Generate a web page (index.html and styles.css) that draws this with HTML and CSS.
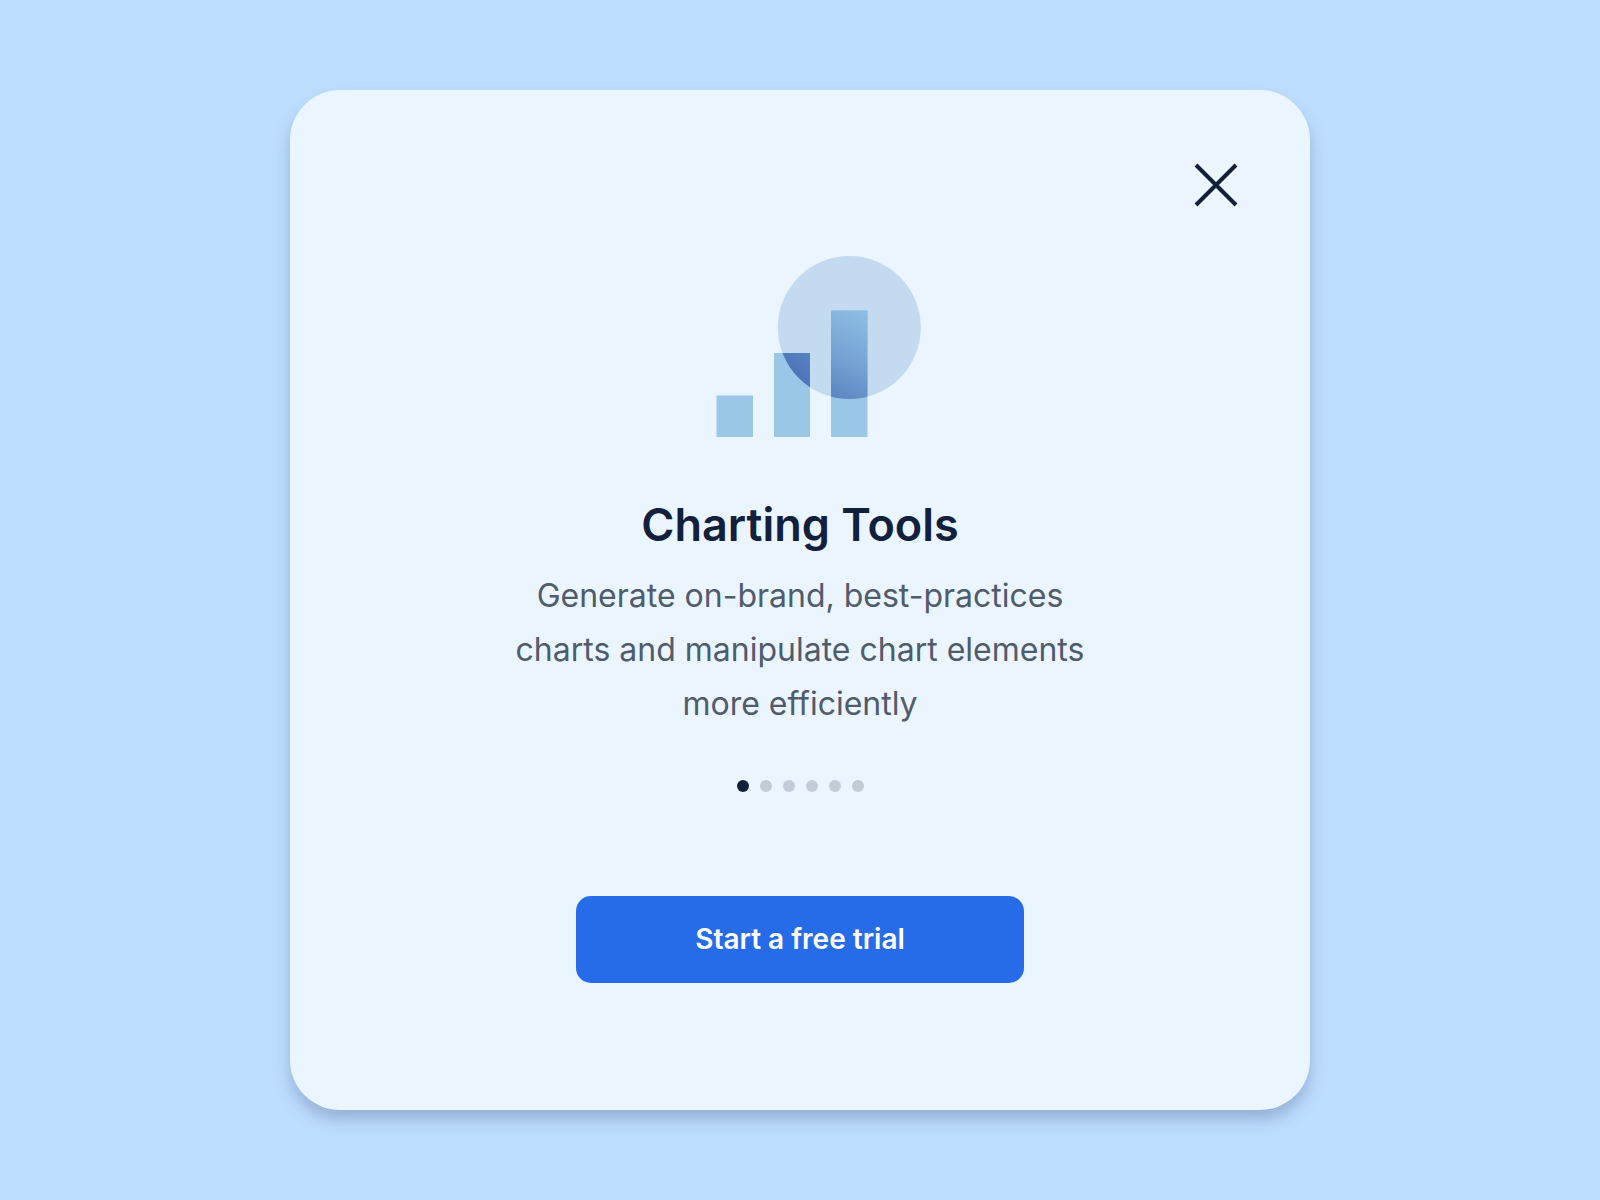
FILE: index.html
```
<!DOCTYPE html>
<html lang="en">
<head>
  <meta charset="UTF-8" />
  <meta name="viewport" content="width=device-width, initial-scale=1" />
  <title>Charting Tools</title>
  <link rel="stylesheet" href="styles.css">
</head>
<body>
  <main class="card">
    <button class="close" type="button" aria-label="Close">
      <svg viewBox="0 0 42 42" width="42" height="42">
        <path d="M1 1 L41 41 M41 1 L1 41" />
      </svg>
    </button>

    <!-- Bar chart with lens -->
    <svg class="illustration" viewBox="0 0 240 181" width="240" height="181" aria-hidden="true">
      <defs>
        <linearGradient id="overlap" gradientUnits="userSpaceOnUse" x1="187" y1="54" x2="140" y2="150">
          <stop offset="0" stop-color="#8fbfe4" />
          <stop offset="0.5" stop-color="#75a2d3" />
          <stop offset="1" stop-color="#547cbc" />
        </linearGradient>
        <linearGradient id="overlap-small" gradientUnits="userSpaceOnUse" x1="130" y1="97" x2="106" y2="130">
          <stop offset="0" stop-color="#5a83c2" />
          <stop offset="1" stop-color="#456db3" />
        </linearGradient>
        <clipPath id="lens">
          <circle cx="169.3" cy="71.5" r="71.5" />
        </clipPath>
      </defs>
      <circle cx="169.3" cy="71.5" r="71.5" fill="#c3daf0" />
      <g fill="#9ac7e7">
        <rect x="36.5" y="139.5" width="36.5" height="41.5" />
        <rect x="94" y="97" width="36" height="84" />
        <rect x="151" y="54.5" width="36.5" height="126.5" />
      </g>
      <g clip-path="url(#lens)">
        <rect x="94" y="97" width="36" height="84" fill="url(#overlap-small)" />
        <rect x="151" y="54.5" width="36.5" height="126.5" fill="url(#overlap)" />
      </g>
    </svg>

    <h1>Charting Tools</h1>
    <p>Generate on-brand, best-practices charts and manipulate chart elements more efficiently</p>

    <!-- Slides -->
    <div class="dots">
      <button class="dot active" type="button" aria-label="Slide 1"></button>
      <button class="dot" type="button" aria-label="Slide 2"></button>
      <button class="dot" type="button" aria-label="Slide 3"></button>
      <button class="dot" type="button" aria-label="Slide 4"></button>
      <button class="dot" type="button" aria-label="Slide 5"></button>
      <button class="dot" type="button" aria-label="Slide 6"></button>
    </div>

    <button class="cta" type="button">Start a free trial</button>
  </main>
</body>
</html>
```
FILE: styles.css
```
* {
  box-sizing: border-box;
}

body {
  margin: 0;
  min-height: 100vh;
  display: flex;
  align-items: center;
  justify-content: center;
  background-color: #bedeff;
  font-family: Inter, sans-serif;
}

.card {
  display: flex;
  flex-direction: column;
  align-items: center;
  width: 100%;
  max-width: 1020px;
  padding: 74px 73px 127px;
  border-radius: 50px;
  background-color: #eaf5ff;
  box-shadow: 0 10px 16px rgba(90, 115, 155, 0.4);
}

button {
  padding: 0;
  border: none;
  font-family: inherit;
  cursor: pointer;
}

.close {
  align-self: flex-end;
  width: 42px;
  height: 42px;
  background: none;
}

.close svg {
  display: block;
  overflow: visible;
  fill: none;
  stroke: #12203b;
  stroke-width: 4;
}

.illustration {
  margin-top: 50px;
  overflow: visible;
}

h1 {
  margin: 56px 0 0;
  color: #12203b;
  font-size: 45px;
  font-weight: 600;
  line-height: 64px;
}

p {
  max-width: 600px;
  margin: 12px 0 0;
  color: #505b6b;
  font-size: 32px;
  line-height: 54px;
  text-align: center;
}

.dots {
  display: flex;
  gap: 11px;
  margin-top: 49px;
}

.dot {
  width: 12px;
  height: 12px;
  border-radius: 50%;
  background-color: #c2ccd8;
}

.dot.active {
  background-color: #12203b;
}

.cta {
  width: 100%;
  max-width: 448px;
  margin-top: 104px;
  padding: 24px;
  border-radius: 15px;
  background-color: #266ce8;
  color: #ffffff;
  font-size: 28px;
  font-weight: 600;
  line-height: 39px;
}

.cta:hover {
  background-color: #1f5fd1;
}
```
